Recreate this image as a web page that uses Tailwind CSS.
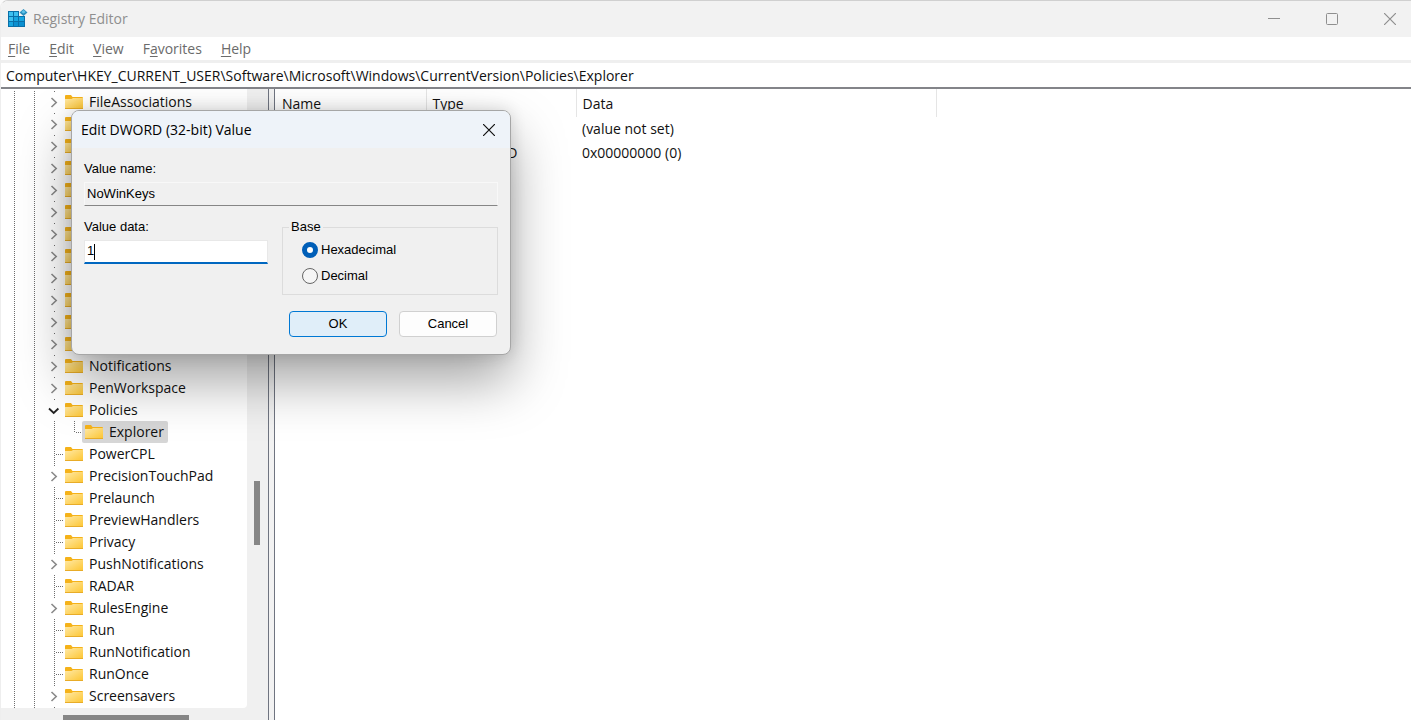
<!DOCTYPE html>
<html lang="en">
<head>
<meta charset="utf-8">
<title>Registry Editor</title>
<script src="https://cdn.jsdelivr.net/npm/@tailwindcss/browser@4"></script>
</head>
<body class="h-screen overflow-hidden bg-[#fafafa] font-['Open_Sans','Noto_Sans',sans-serif] text-sm text-[#111]">
<div class="relative flex h-full flex-col overflow-hidden rounded-tl-lg border-t border-l border-t-[#d0d0d0] border-l-[#eeeeee] bg-white">
  <header class="flex h-9 shrink-0 items-center bg-[#f2f2f2] pl-[7px] text-[#8f8f8f]">
    <svg class="mr-[5px] h-5 w-5" viewBox="0 0 20 20" aria-hidden="true">
      <path d="M0 2h12v5h5v11H0z" fill="#0a6fa8"/>
      <g fill="#3cc0f0"><path d="M1 3h4v4H1zM6 3h4v4H6zM1 8h4v4H1z"/></g>
      <g fill="#16a5e0"><path d="M6 8h4v4H6zM11 8h5v4h-5zM1 13h4v4H1z"/></g>
      <g fill="#0a8fd0"><path d="M6 13h4v4H6zM11 13h5v4h-5z"/></g>
      <path d="M11 0h9v7h-9z" fill="#f2f2f2"/>
      <path d="M15.500 0l4 3.500-4 3.500-4-3.500z" fill="#2a8fbe"/><path d="M15.500 1l2.200 2-2.200 1.500-2.200-1.500z" fill="#5fc3ea"/>
    </svg>
    <h1>Registry Editor</h1>
    <div class="-mr-2 ml-auto flex">
      <button aria-label="Minimize" class="grid h-9 w-[58px] place-items-center"><svg class="h-3 w-3" viewBox="0 0 12 12"><path d="M0 5.500h12" stroke="#8f8f8f"/></svg></button>
      <button aria-label="Maximize" class="grid h-9 w-[58px] place-items-center"><svg class="h-3 w-3" viewBox="0 0 12 12"><rect x=".5" y=".5" width="11" height="11" rx="1" fill="none" stroke="#8f8f8f"/></svg></button>
      <button aria-label="Close" class="grid h-9 w-[58px] place-items-center"><svg class="h-3 w-3" viewBox="0 0 12 12"><path d="M0 0l12 12M12 0L0 12" stroke="#8f8f8f" stroke-width="1.200"/></svg></button>
    </div>
  </header>
  <nav class="flex h-[23px] shrink-0 items-center gap-[19px] pt-px pl-[7px] text-[#6b6b6b]">
    <button><u class="underline-offset-2">F</u>ile</button>
    <button><u class="underline-offset-2">E</u>dit</button>
    <button><u class="underline-offset-2">V</u>iew</button>
    <button>F<u class="underline-offset-2">a</u>vorites</button>
    <button><u class="underline-offset-2">H</u>elp</button>
  </nav>
  <div class="shrink-0 border-t-3 border-b-2 border-t-[#efefef] border-b-[#838489]">
    <input aria-label="Path" class="block h-6 w-full pl-[5px] outline-none" value="Computer\HKEY_CURRENT_USER\Software\Microsoft\Windows\CurrentVersion\Policies\Explorer">
  </div>
  <main class="flex min-h-0 flex-1">
    <aside class="flex w-[268px] shrink-0 flex-col border-r border-[#6f7480] bg-[#f0f0f0]">
      <div class="flex min-h-0 flex-1">
        <ul id="tree" role="tree" class="min-w-0 flex-1 overflow-hidden rounded-br bg-white pt-[2px]"></ul>
        <div class="w-[21px] shrink-0 pt-[392px] pl-[7px]"><div class="h-16 w-[6px] bg-[#868686]"></div></div>
      </div>
      <div class="h-3 shrink-0 pt-[7px] pl-[62px]"><div class="h-[5px] w-[126px] bg-[#868686]"></div></div>
    </aside>
    <section class="min-w-0 flex-1 border-l-5 border-[#f2f2f2]">
      <div class="h-full border-l border-[#6f7480]">
      <table class="w-full table-fixed text-left">
        <colgroup><col class="w-[151px]"><col class="w-[150px]"><col class="w-[360px]"><col></colgroup>
        <thead><tr class="h-7">
          <th class="border-r border-[#e5e5e5] pt-px pl-[7px] font-normal">Name</th>
          <th class="border-r border-[#e5e5e5] pt-px pl-[6px] font-normal">Type</th>
          <th class="border-r border-[#e5e5e5] pt-px pl-[6px] font-normal">Data</th><th></th>
        </tr></thead>
        <tbody>
          <tr class="h-6"><td></td><td></td><td class="pl-[6px]">(value not set)</td></tr>
          <tr class="h-6"><td></td><td class="pl-[6px]">REG_DWORD</td><td class="pl-[6px]">0x00000000 (0)</td></tr>
        </tbody>
      </table>
      </div>
    </section>
  </main>

  <form role="dialog" aria-labelledby="dlg" class="absolute top-[109px] left-[70px] w-[440px] overflow-hidden rounded-lg border border-[#a6a6a6] bg-[#f0f0f0] pb-[17px] font-['Liberation_Sans',sans-serif] text-[13px] text-black shadow-[0_26px_54px_rgba(0,0,0,0.36),0_0_16px_rgba(0,0,0,0.14)]">
    <div class="flex h-[37px] items-center bg-[#eef3f9] pl-[9px] font-['Open_Sans',sans-serif] text-sm">
      <h2 id="dlg">Edit DWORD (32-bit) Value</h2>
      <button type="button" aria-label="Close dialog" class="ml-auto grid h-9 w-[42px] place-items-center"><svg class="h-3 w-3" viewBox="0 0 12 12"><path d="M0 0l12 12M12 0L0 12" stroke="#111" stroke-width="1.200"/></svg></button>
    </div>
    <div class="px-3 pt-3">
      <label for="vn" class="block h-[22px] leading-[18px]">Value name:</label>
      <input id="vn" readonly value="NoWinKeys" class="block h-6 w-full border border-[#f8f8f8] border-b-[#868686] bg-[#f0f0f0] pb-px pl-[2px] outline-none">
      <div class="mt-3 flex gap-[14px]">
        <div class="w-[184px]">
          <label for="vd" class="block h-[22px] leading-[18px]">Value data:</label>
          <div class="flex h-6 items-center border border-b-2 border-[#e8e8e8] border-b-[#0067c0] bg-white pl-[2px]">
            <input id="vd" value="1" class="w-[7px] outline-none"><span class="h-4 w-px bg-black"></span>
          </div>
        </div>
        <fieldset class="h-[77px] flex-1 border border-[#dcdcdc] pl-[19px]">
          <legend class="-ml-[13px] h-[18px] px-[2px] leading-[18px]">Base</legend>
          <label class="mt-[6px] flex h-4 items-center gap-[3px]"><input type="radio" name="base" checked class="h-4 w-4 appearance-none rounded-full border border-[#666] bg-[#f6f6f6] checked:border-5 checked:border-[#005fb8] checked:bg-white">Hexadecimal</label>
          <label class="mt-[10px] flex h-4 items-center gap-[3px]"><input type="radio" name="base" class="h-4 w-4 appearance-none rounded-full border border-[#666] bg-[#f6f6f6] checked:border-5 checked:border-[#005fb8] checked:bg-white">Decimal</label>
        </fieldset>
      </div>
      <div class="mt-4 flex justify-end gap-3 pr-px">
        <button type="button" class="h-[26px] w-[98px] rounded border border-[#0078d4] bg-[#e0eef9]">OK</button>
        <button type="button" class="h-[26px] w-[98px] rounded border border-[#d0d0d0] bg-[#fdfdfd]">Cancel</button>
      </div>
    </div>
  </form>
</div>
<svg class="absolute h-0 w-0" aria-hidden="true"><defs><linearGradient id="fg" x1="0" y1="0" x2="1" y2="1"><stop offset="0" stop-color="#ffe9a6"/><stop offset="1" stop-color="#fdc633"/></linearGradient></defs></svg>
<script>
// Kinds: c = collapsed, o = open, l = leaf, s = selected child
const rows = [['c','FileAssociations'],['c',''],['c',''],['c',''],['c',''],['c',''],['c',''],['c',''],['c',''],['c',''],['c',''],['c',''],
 ['c','Notifications'],['c','PenWorkspace'],['o','Policies'],['s','Explorer'],['l','PowerCPL'],['c','PrecisionTouchPad'],['l','Prelaunch'],
 ['l','PreviewHandlers'],['l','Privacy'],['c','PushNotifications'],['l','RADAR'],['c','RulesEngine'],['l','Run'],['l','RunNotification'],['l','RunOnce'],['c','Screensavers'],['c','']];
const guide = d => `<path d="${d}" stroke="#6e6e6e" stroke-dasharray="1 1" fill="none"/>`;
const marks = {
  c: guide('M19.500 0v2') + '<path d="M16.500 7l4.700 4.500-4.700 4.500" stroke="#8a8a8a" stroke-width="1.600" fill="none"/>',
  o: guide('M19.500 0v2') + '<path d="M14 9.500l4.700 4.500 4.700-4.500" stroke="#222" stroke-width="1.800" fill="none"/>',
  l: guide('M19.500 0v22') + guide('M21 11.500h8'),
  s: guide('M19.500 0v22') + guide('M39.500 0v12') + guide('M41 11.500h7')
};
const folder = '<svg class="h-[14px] w-[18px] shrink-0" viewBox="0 0 18 14"><path d="M0 1q0-1 1-1h5l1.500 2H17q1 0 1 1v3H0z" fill="#f5b219"/><path d="M0 4h6.500L8 3h10v10.500H0z" fill="url(#fg)"/><path d="M0 13.500h18" stroke="#e8ac28"/></svg>';
document.getElementById('tree').innerHTML = rows.map(([k, n]) => {
  const sel = k === 's';
  return `<li role="treeitem" class="flex h-[22px] items-center">
    <svg class="h-[22px] w-[34px] shrink-0" viewBox="0 0 34 22">${guide('M13.500 0v22')}${guide('M33.500 0v22')}</svg>
    <svg class="h-[22px] ${sel ? 'w-[47px]' : 'w-[30px]'} shrink-0" viewBox="0 0 ${sel ? 47 : 30} 22">${marks[k]}</svg>
    <span class="${sel ? 'flex h-[22px] items-center gap-[6px] rounded-xs bg-[#d6d6d6] pr-1 pl-[3px]' : 'flex h-[22px] items-center gap-[6px]'}">${folder}${n}</span></li>`;
}).join('');
</script>
</body>
</html>
